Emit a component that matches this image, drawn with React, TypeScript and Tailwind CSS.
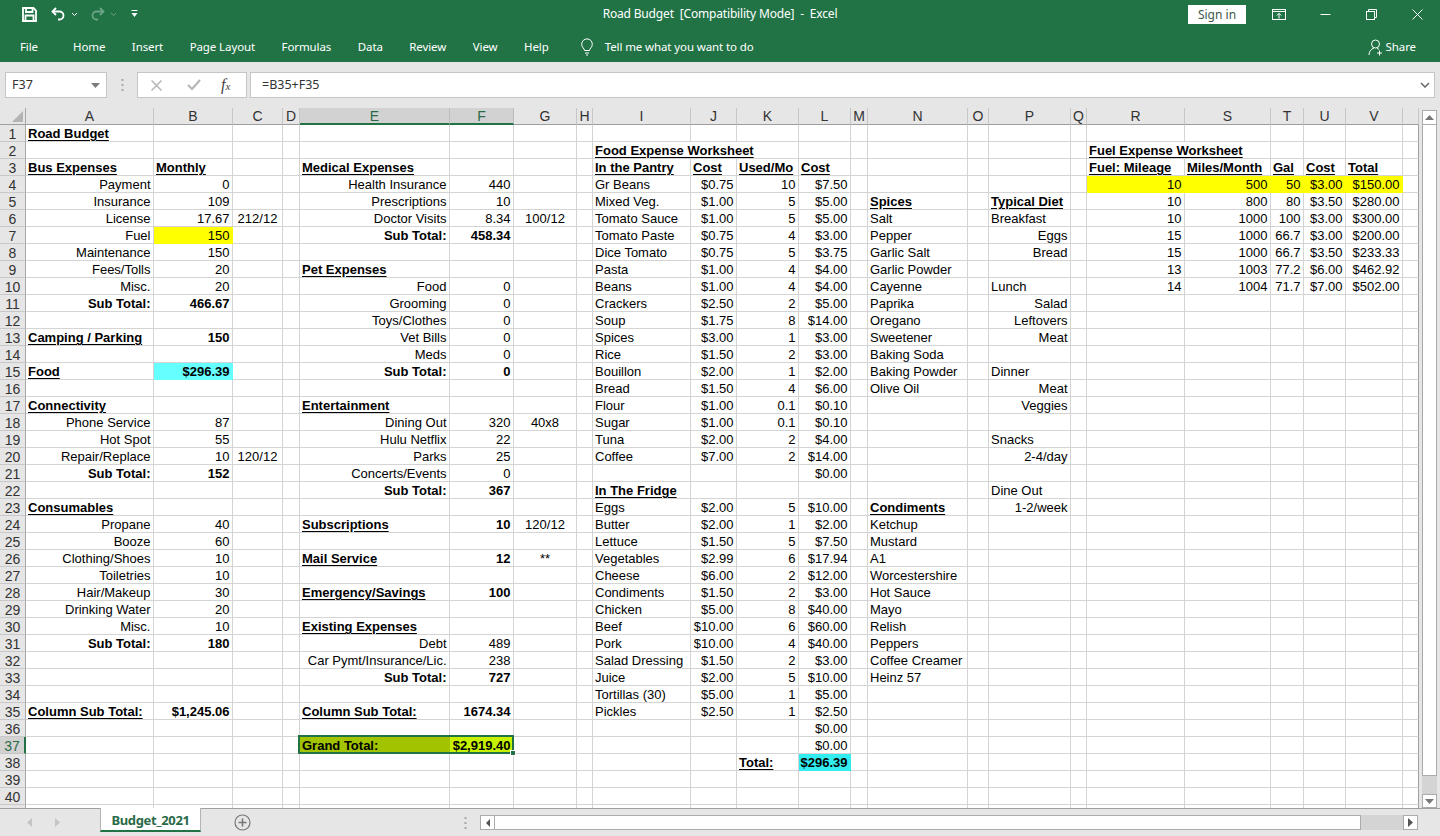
import React from 'react';

type Cell = { t: string; k: string; fill?: string; span?: number };

const COLS = ['A','B','C','D','E','F','G','H','I','J','K','L','M','N','O','P','Q','R','S','T','U','V','W'];

const L = 'text-left pl-[2px]';
const R = 'text-right pr-[2.5px]';
const C = 'text-center';
const BR = 'text-right pr-[2.5px] font-bold';
const BU = 'text-left pl-[2px] font-bold underline underline-offset-2';

const FILL: Record<string, string> = {
  yellow: 'bg-[#ffff00] border-[#ffff00]',
  cyan: 'bg-[#66ffff] border-[#66ffff]',
  cyan2: 'bg-[#33ecf0] border-[#33ecf0]',
  green: 'bg-[#a2c400] border-[#a2c400]',
  lime: 'bg-[#c6f200] border-[#c6f200]',
};

const cells: Record<string, Cell> = {};
const put = (id: string, t: string, k: string, fill?: string, span?: number) => { cells[id] = { t, k, fill, span }; };

// Left budget block
put('A1', 'Road Budget', BU);
put('A3', 'Bus Expenses', BU);
put('B3', 'Monthly', BU);
([
  [4,'Payment','0'],[5,'Insurance','109'],[6,'License','17.67'],[7,'Fuel','150'],[8,'Maintenance','150'],
  [9,'Fees/Tolls','20'],[10,'Misc.','20'],[18,'Phone Service','87'],[19,'Hot Spot','55'],[20,'Repair/Replace','10'],
  [24,'Propane','40'],[25,'Booze','60'],[26,'Clothing/Shoes','10'],[27,'Toiletries','10'],[28,'Hair/Makeup','30'],
  [29,'Drinking Water','20'],[30,'Misc.','10'],
] as [number,string,string][]).forEach(([r,a,b]) => { put('A'+r,a,R); put('B'+r,b,R); });
cells['B7'].fill = 'yellow';
put('C6', '212/12', C);
put('C20', '120/12', C);
([[11,'466.67'],[21,'152'],[31,'180']] as [number,string][]).forEach(([r,b]) => { put('A'+r,'Sub Total:',BR); put('B'+r,b,BR); });
put('A13', 'Camping / Parking', BU); put('B13', '150', BR);
put('A15', 'Food', BU); put('B15', '$296.39', BR, 'cyan');
put('A17', 'Connectivity', BU);
put('A23', 'Consumables', BU);
put('A35', 'Column Sub Total:', BU); put('B35', '$1,245.06', BR);

// Middle block
put('E3', 'Medical Expenses', BU);
([
  [4,'Health Insurance','440'],[5,'Prescriptions','10'],[6,'Doctor Visits','8.34'],
  [10,'Food','0'],[11,'Grooming','0'],[12,'Toys/Clothes','0'],[13,'Vet Bills','0'],[14,'Meds','0'],
  [18,'Dining Out','320'],[19,'Hulu Netflix','22'],[20,'Parks','25'],[21,'Concerts/Events','0'],
  [31,'Debt','489'],[32,'Car Pymt/Insurance/Lic.','238'],
] as [number,string,string][]).forEach(([r,a,b]) => { put('E'+r,a,R); put('F'+r,b,R); });
([[7,'458.34'],[15,'0'],[22,'367'],[33,'727']] as [number,string][]).forEach(([r,b]) => { put('E'+r,'Sub Total:',BR); put('F'+r,b,BR); });
put('G6','100/12',C); put('G18','40x8',C); put('G24','120/12',C); put('G26','**',C);
put('E9','Pet Expenses',BU); put('E17','Entertainment',BU);
put('E24','Subscriptions',BU); put('F24','10',BR);
put('E26','Mail Service',BU); put('F26','12',BR);
put('E28','Emergency/Savings',BU); put('F28','100',BR);
put('E30','Existing Expenses',BU);
put('E35','Column Sub Total:',BU); put('F35','1674.34',BR);
put('E37','Grand Total:',BU,'green'); put('F37','$2,919.40',BR,'lime');

// Food worksheet
put('I2','Food Expense Worksheet',BU,undefined,3);
put('I3','In the Pantry',BU); put('J3','Cost',BU); put('K3','Used/Mo',BU); put('L3','Cost',BU);
([
  [4,'Gr Beans','$0.75','10','$7.50'],[5,'Mixed Veg.','$1.00','5','$5.00'],[6,'Tomato Sauce','$1.00','5','$5.00'],
  [7,'Tomato Paste','$0.75','4','$3.00'],[8,'Dice Tomato','$0.75','5','$3.75'],[9,'Pasta','$1.00','4','$4.00'],
  [10,'Beans','$1.00','4','$4.00'],[11,'Crackers','$2.50','2','$5.00'],[12,'Soup','$1.75','8','$14.00'],
  [13,'Spices','$3.00','1','$3.00'],[14,'Rice','$1.50','2','$3.00'],[15,'Bouillon','$2.00','1','$2.00'],
  [16,'Bread','$1.50','4','$6.00'],[17,'Flour','$1.00','0.1','$0.10'],[18,'Sugar','$1.00','0.1','$0.10'],
  [19,'Tuna','$2.00','2','$4.00'],[20,'Coffee','$7.00','2','$14.00'],
  [23,'Eggs','$2.00','5','$10.00'],[24,'Butter','$2.00','1','$2.00'],[25,'Lettuce','$1.50','5','$7.50'],
  [26,'Vegetables','$2.99','6','$17.94'],[27,'Cheese','$6.00','2','$12.00'],[28,'Condiments','$1.50','2','$3.00'],
  [29,'Chicken','$5.00','8','$40.00'],[30,'Beef','$10.00','6','$60.00'],[31,'Pork','$10.00','4','$40.00'],
  [32,'Salad Dressing','$1.50','2','$3.00'],[33,'Juice','$2.00','5','$10.00'],[34,'Tortillas (30)','$5.00','1','$5.00'],
  [35,'Pickles','$2.50','1','$2.50'],
] as [number,string,string,string,string][]).forEach(([r,i,j,k,l]) => { put('I'+r,i,L); put('J'+r,j,R); put('K'+r,k,R); put('L'+r,l,R); });
put('L21','$0.00',R); put('L36','$0.00',R); put('L37','$0.00',R);
put('I22','In The Fridge',BU);
put('K38','Total:',BU); put('L38','$296.39',BR,'cyan2');

// Spices, condiments and diet
put('N5','Spices',BU); put('N23','Condiments',BU);
([
  [6,'Salt'],[7,'Pepper'],[8,'Garlic Salt'],[9,'Garlic Powder'],[10,'Cayenne'],[11,'Paprika'],[12,'Oregano'],
  [13,'Sweetener'],[14,'Baking Soda'],[15,'Baking Powder'],[16,'Olive Oil'],[24,'Ketchup'],[25,'Mustard'],[26,'A1'],
  [27,'Worcestershire'],[28,'Hot Sauce'],[29,'Mayo'],[30,'Relish'],[31,'Peppers'],[32,'Coffee Creamer'],[33,'Heinz 57'],
] as [number,string][]).forEach(([r,t]) => put('N'+r,t,L));
put('P5','Typical Diet',BU);
([[6,'Breakfast'],[10,'Lunch'],[15,'Dinner'],[19,'Snacks'],[22,'Dine Out']] as [number,string][]).forEach(([r,t]) => put('P'+r,t,L));
([[7,'Eggs'],[8,'Bread'],[11,'Salad'],[12,'Leftovers'],[13,'Meat'],[16,'Meat'],[17,'Veggies'],[20,'2-4/day'],[23,'1-2/week']] as [number,string][]).forEach(([r,t]) => put('P'+r,t,R));

// Fuel worksheet
put('R2','Fuel Expense Worksheet',BU,undefined,2);
put('R3','Fuel: Mileage',BU); put('S3','Miles/Month',BU); put('T3','Gal',BU); put('U3','Cost',BU); put('V3','Total',BU);
([
  [4,'10','500','50','$3.00','$150.00'],[5,'10','800','80','$3.50','$280.00'],[6,'10','1000','100','$3.00','$300.00'],
  [7,'15','1000','66.7','$3.00','$200.00'],[8,'15','1000','66.7','$3.50','$233.33'],[9,'13','1003','77.2','$6.00','$462.92'],
  [10,'14','1004','71.7','$7.00','$502.00'],
] as [number,string,string,string,string,string][]).forEach(([r,a,b,c,d,e]) => {
  const f = r === 4 ? 'yellow' : undefined;
  put('R'+r,a,R,f); put('S'+r,b,R,f); put('T'+r,c,R,f); put('U'+r,d,R,f); put('V'+r,e,R,f);
});

function Sheet() {
  const out: React.ReactNode[] = [];
  out.push(
    <div key="corner" className="bg-[#e6e6e6] border-r border-b border-r-[#a8a8a8] border-b-[#9e9e9e] flex items-end justify-end pr-[2px] pb-[2px]">
      <svg width="11" height="11" viewBox="0 0 11 11"><polygon points="11,0 11,11 0,11" fill="#b4b4b4" /></svg>
    </div>
  );
  COLS.forEach((c) => {
    const sel = c === 'E' || c === 'F';
    out.push(
      <div
        key={'h' + c}
        className={
          sel
            ? 'bg-[#d2d2d2] text-[#2a6a48] border-b-2 border-r border-b-[#217346] border-r-[#bdbdbd] text-center text-[14px] leading-[17px]'
            : 'bg-[#e6e6e6] text-[#333333] border-b border-r border-b-[#9e9e9e] border-r-[#c6c6c6] text-center text-[14px] leading-[17px]'
        }
      >
        {c === 'W' ? '' : c}
      </div>
    );
  });
  for (let r = 1; r <= 41; r++) {
    const sel = r === 37;
    out.push(
      <div
        key={'r' + r}
        className={
          sel
            ? 'bg-[#d2d2d2] text-[#2a6a48] border-r-2 border-b border-r-[#217346] border-b-[#c4c4c4] text-center text-[14px] leading-[18px]'
            : 'bg-[#e6e6e6] text-[#333333] border-r border-b border-r-[#a8a8a8] border-b-[#c8c8c8] text-center text-[14px] leading-[18px]'
        }
      >
        {r <= 40 ? r : ''}
      </div>
    );
    for (let i = 0; i < COLS.length; i++) {
      const id = COLS[i] + r;
      const cell = cells[id];
      const span = cell?.span ?? 1;
      const base = 'border-r border-b whitespace-nowrap text-[13px] leading-[18px] text-black';
      const bord = cell?.fill ? FILL[cell.fill] : 'bg-white border-[#d4d4d4]';
      const last = COLS[i] === 'W' ? 'border-r-[#a0a0a0]' : '';
      const spanClass = span === 3 ? 'col-span-3' : span === 2 ? 'col-span-2' : '';
      out.push(
        <div key={id} className={`${base} ${bord} ${last} ${spanClass} ${cell?.k ?? ''}`}>
          {cell?.t ?? ''}
        </div>
      );
      i += span - 1;
    }
  }
  return (
    <div className="relative w-[1419px] h-[700px] overflow-hidden font-['Liberation_Sans',Arial,sans-serif]">
      <div className="grid grid-cols-[26px_128px_79px_50px_17px_150px_64px_63px_16px_98px_46px_62px_52px_17px_100px_21px_82px_16px_98px_86px_33px_42px_57px_16px] auto-rows-[17px]">
        {out}
      </div>
      <div className="absolute left-[298px] top-[627px] w-[216px] h-[19px] border-2 border-[#217346] pointer-events-none" />
      <div className="absolute left-[510px] top-[642px] w-[6px] h-[6px] bg-[#217346] border border-white" />
    </div>
  );
}

const Chev = ({ c = '#ffffff' }: { c?: string }) => (
  <svg width="7" height="5" viewBox="0 0 7 5" fill="none" stroke={c} strokeWidth="1"><path d="M1 1l2.5 2.5L6 1" /></svg>
);

function TitleBar() {
  return (
    <div className="grid grid-cols-[1fr_auto_1fr] items-center h-[31px] pb-[3px] bg-[#217346] text-white">
      <div className="flex items-center pl-[22px]">
        <svg width="15" height="15" viewBox="0 0 15 15" fill="none" stroke="#fff" strokeWidth="1.8">
          <path d="M1 1h10.5L14 3.500V14H1z" />
          <path d="M4 1v4h6.500V1" />
          <path d="M3.500 14V8.500h8V14" />
        </svg>
        <svg className="ml-[14px]" width="15" height="14" viewBox="0 0 15 14" fill="none" stroke="#fff" strokeWidth="1.8">
          <path d="M5 1L1.500 4.500 5 8" />
          <path d="M2 4.500h6.500a4 4 0 0 1 0 8H7" />
        </svg>
        <div className="ml-[5px]"><Chev /></div>
        <svg className="ml-[12px]" width="15" height="14" viewBox="0 0 15 14" fill="none" stroke="#6aa385" strokeWidth="1.8">
          <path d="M10 1l3.500 3.500L10 8" />
          <path d="M13 4.500H6.500a4 4 0 0 0 0 8H8" />
        </svg>
        <div className="ml-[5px]"><Chev c="#6aa385" /></div>
        <svg className="ml-[14px]" width="7" height="8" viewBox="0 0 7 8" fill="#fff"><rect x="0.5" y="0" width="6" height="1" /><polygon points="0.5,3 6.5,3 3.5,7" /></svg>
      </div>
      <div className="text-[12px] tracking-[-0.17px] whitespace-pre">Road Budget  [Compatibility Mode]  -  Excel</div>
      <div className="flex items-center justify-end">
        <div className="w-[58px] h-[19px] bg-white text-[#3c5a4a] text-[12px] leading-[19px] text-center">Sign in</div>
        <div className="ml-[10px] w-[46px] flex justify-center">
          <svg width="14" height="11" viewBox="0 0 14 11" fill="none" stroke="#fff" strokeWidth="1">
            <rect x="0.5" y="0.5" width="13" height="10" />
            <path d="M0.500 2.500h13M7 9.500V4.500M4.800 6.500L7 4.300l2.200 2.200" />
          </svg>
        </div>
        <div className="w-[46px] flex justify-center">
          <svg width="11" height="11" viewBox="0 0 11 11" stroke="#fff"><path d="M0.500 5.500h10" /></svg>
        </div>
        <div className="w-[46px] flex justify-center">
          <svg width="11" height="11" viewBox="0 0 11 11" fill="none" stroke="#fff"><rect x="0.5" y="2.500" width="8" height="8" /><path d="M2.500 2.500v-2h8v8h-2" /></svg>
        </div>
        <div className="w-[46px] flex justify-center">
          <svg width="11" height="11" viewBox="0 0 11 11" stroke="#fff"><path d="M0.500 0.500l10 10M10.500 0.500l-10 10" /></svg>
        </div>
      </div>
    </div>
  );
}

function RibbonTabs() {
  return (
    <div className="flex items-center h-[31px] pt-[1px] bg-[#217346] text-white text-[11.5px] tracking-[-0.1px] pl-[20px]">
      <span className="mr-[35px]">File</span>
      <div className="flex items-center gap-[26.5px]">
        {['Home', 'Insert', 'Page Layout', 'Formulas', 'Data', 'Review', 'View', 'Help'].map((t) => (
          <span key={t}>{t}</span>
        ))}
      </div>
      <svg className="ml-[30px]" width="16" height="18" viewBox="0 0 16 18" fill="none" stroke="#fff" strokeWidth="1">
        <path d="M5.500 12.500c0-2-2.800-3-2.800-6.300a5.300 5.300 0 0 1 10.600 0c0 3.300-2.800 4.300-2.800 6.300z" />
        <path d="M6 15h4M7 17h2" />
      </svg>
      <span className="ml-[10px]">Tell me what you want to do</span>
      <div className="ml-auto flex items-center pr-[24px]">
        <svg width="16" height="17" viewBox="0 0 16 17" fill="none" stroke="#fff" strokeWidth="1">
          <circle cx="7.500" cy="5" r="4" />
          <path d="M1 16c0-3.500 2-6 5-7M9 9.200c.8.300 1.500.7 2 1.300M11.500 11.500v5M9 14h5" />
        </svg>
        <span className="ml-[2px]">Share</span>
      </div>
    </div>
  );
}

function FormulaBar() {
  return (
    <div className="flex items-center h-[46px] bg-[#e6e6e6] text-[12.5px] text-[#333333]">
      <div className="ml-[5px] w-[102px] h-[26px] bg-white border border-[#c6c6c6] flex items-center justify-between pl-[6px] pr-[6px]">
        <span>F37</span>
        <svg width="9" height="5" viewBox="0 0 9 5" fill="#7a7a7a"><polygon points="0,0 9,0 4.500,5" /></svg>
      </div>
      <div className="w-[30px] flex justify-center">
        <svg width="3" height="12" viewBox="0 0 3 12" fill="#a8a8a8"><rect x="0.500" y="0" width="2" height="2" /><rect x="0.500" y="5" width="2" height="2" /><rect x="0.500" y="10" width="2" height="2" /></svg>
      </div>
      <div className="w-[110px] h-[26px] bg-white border border-[#c6c6c6] flex items-center pl-[13px]">
        <svg width="11" height="11" viewBox="0 0 11 11" stroke="#b5b5b5" strokeWidth="1.500"><path d="M0.500 0.500l10 10M10.500 0.500l-10 10" /></svg>
        <svg className="ml-[25px]" width="14" height="12" viewBox="0 0 14 12" fill="none" stroke="#b5b5b5" strokeWidth="2"><path d="M1 6l4 4 8-9" /></svg>
        <span className="ml-[20px] font-['Liberation_Serif',serif] italic text-[16px] text-[#444444]">f<span className="text-[11px]">x</span></span>
      </div>
      <div className="ml-[3px] w-[1185px] h-[26px] bg-white border border-[#c6c6c6] flex items-center pl-[11px] pr-[4px] justify-between">
        <span>=B35+F35</span>
        <svg width="10" height="6" viewBox="0 0 10 6" fill="none" stroke="#666" strokeWidth="1.500"><path d="M1 1l4 4 4-4" /></svg>
      </div>
    </div>
  );
}

function VScroll() {
  return (
    <div className="flex flex-col w-[21px] h-[700px] bg-[#e6e6e6] pl-[3px] pt-[2px]">
      <div className="w-[15px] h-[15px] bg-white border border-[#ababab] flex items-center justify-center">
        <svg width="9" height="5" viewBox="0 0 9 5" fill="#777"><polygon points="4.500,0 9,5 0,5" /></svg>
      </div>
      <div className="w-[15px] h-[651px] bg-white border-x border-b border-[#ababab]" />
      <div className="w-[15px] h-[18px] bg-[#d4d4d4]" />
      <div className="w-[15px] h-[14px] bg-white border border-[#ababab] flex items-center justify-center">
        <svg width="9" height="5" viewBox="0 0 9 5" fill="#777"><polygon points="0,0 9,0 4.500,5" /></svg>
      </div>
    </div>
  );
}

function BottomBar() {
  return (
    <div className="flex items-start h-[28px] bg-[#e6e6e6] border-t border-[#a0a0a0]">
      <div className="flex items-center w-[100px] h-[27px] pl-[27px] gap-[23px]">
        <svg width="5" height="9" viewBox="0 0 5 9" fill="#c4c4c4"><polygon points="5,0 5,9 0,4.500" /></svg>
        <svg width="5" height="9" viewBox="0 0 5 9" fill="#c4c4c4"><polygon points="0,0 0,9 5,4.500" /></svg>
      </div>
      <div className="w-[101px] h-[24px] bg-white border-x border-[#b4b4b4] border-b-2 border-b-[#217346] -mt-px text-center text-[13px] leading-[25px] font-bold text-[#2a6a48] font-['Noto_Sans',sans-serif] tracking-[-0.35px]">
        Budget_2021
      </div>
      <div className="ml-[33px] mt-[5px]">
        <svg width="17" height="17" viewBox="0 0 17 17" fill="none" stroke="#777" strokeWidth="1.200">
          <circle cx="8.500" cy="8.500" r="7.500" />
          <path d="M8.500 4.500v8M4.500 8.500h8" strokeWidth="1.600" />
        </svg>
      </div>
      <div className="ml-[213px] mt-[8px]">
        <svg width="3" height="12" viewBox="0 0 3 12" fill="#a8a8a8"><rect x="0.500" y="0" width="2" height="2" /><rect x="0.500" y="5" width="2" height="2" /><rect x="0.500" y="10" width="2" height="2" /></svg>
      </div>
      <div className="ml-[13px] mt-[6px] flex h-[15px]">
        <div className="w-[15px] bg-white border border-[#ababab] flex items-center justify-center">
          <svg width="4" height="8" viewBox="0 0 4 8" fill="#555"><polygon points="4,0 4,8 0,4" /></svg>
        </div>
        <div className="w-[866px] bg-white border-y border-r border-[#ababab]" />
        <div className="w-[42px] bg-[#d4d4d4]" />
        <div className="w-[15px] bg-white border border-[#ababab] flex items-center justify-center">
          <svg width="5" height="9" viewBox="0 0 5 9" fill="#555"><polygon points="0,0 0,9 5,4.500" /></svg>
        </div>
      </div>
    </div>
  );
}

export default function App() {
  return (
    <div className="w-[1440px] h-[836px] overflow-hidden flex flex-col bg-[#e6e6e6] font-['Noto_Sans',sans-serif]">
      <TitleBar />
      <RibbonTabs />
      <FormulaBar />
      <div className="flex h-[700px]">
        <Sheet />
        <VScroll />
      </div>
      <BottomBar />
    </div>
  );
}
